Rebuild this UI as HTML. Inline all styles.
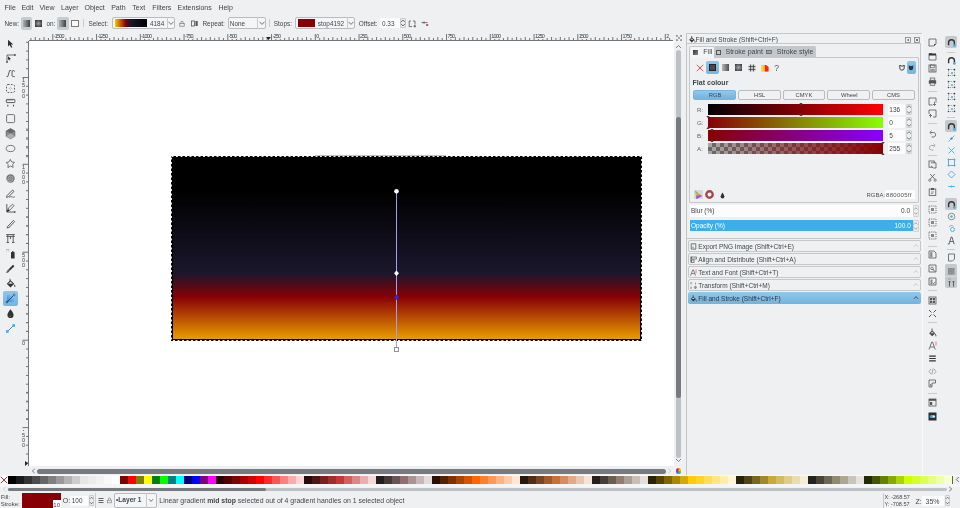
<!DOCTYPE html>
<html><head><meta charset="utf-8"><style>
html,body{margin:0;padding:0}
body{width:960px;height:508px;overflow:hidden;position:relative;background:#eff0f1;font-family:"Liberation Sans",sans-serif;color:#31363b}
#root{position:absolute;left:0;top:0;width:960px;height:508px;will-change:transform;background:#eff0f1}
.t{position:absolute;white-space:nowrap}
.b{position:absolute;display:block}
i{display:block;flex:none}
</style></head><body>
<div id="root">
<div class="t" style="left:4.50px;top:4.07px;font-size:7px;line-height:7px;color:#41464b;font-weight:normal;">File</div>
<div class="t" style="left:21.40px;top:4.07px;font-size:7px;line-height:7px;color:#41464b;font-weight:normal;">Edit</div>
<div class="t" style="left:39.50px;top:4.07px;font-size:7px;line-height:7px;color:#41464b;font-weight:normal;">View</div>
<div class="t" style="left:61.00px;top:4.07px;font-size:7px;line-height:7px;color:#41464b;font-weight:normal;">Layer</div>
<div class="t" style="left:84.50px;top:4.07px;font-size:7px;line-height:7px;color:#41464b;font-weight:normal;">Object</div>
<div class="t" style="left:111.20px;top:4.07px;font-size:7px;line-height:7px;color:#41464b;font-weight:normal;">Path</div>
<div class="t" style="left:132.30px;top:4.07px;font-size:7px;line-height:7px;color:#41464b;font-weight:normal;">Text</div>
<div class="t" style="left:152.30px;top:4.07px;font-size:7px;line-height:7px;color:#41464b;font-weight:normal;">Filters</div>
<div class="t" style="left:177.50px;top:4.07px;font-size:7px;line-height:7px;color:#41464b;font-weight:normal;">Extensions</div>
<div class="t" style="left:218.40px;top:4.07px;font-size:7px;line-height:7px;color:#41464b;font-weight:normal;">Help</div>
<div class="t" style="left:4.50px;top:20.58px;font-size:6.4px;line-height:6.4px;color:#41464b;font-weight:normal;">New:</div>
<div class="b" style="left:21px;top:17px;width:11px;height:13px;background:#c6cbcf;border-radius:2px"></div>
<div class="b" style="left:23px;top:20px;width:7px;height:7px;background:linear-gradient(to right,#b0b0b0,#404040)"></div>
<div class="b" style="left:35px;top:20px;width:7px;height:7px;background:radial-gradient(circle,#a0a0a0 0,#3a3a3a 80%)"></div>
<div class="t" style="left:46.50px;top:20.58px;font-size:6.4px;line-height:6.4px;color:#41464b;font-weight:normal;">on:</div>
<div class="b" style="left:57px;top:17px;width:12px;height:13px;background:#c6cbcf;border-radius:2px"></div>
<div class="b" style="left:59px;top:20px;width:7px;height:7px;background:linear-gradient(to right,#b0b0b0,#404040)"></div>
<div class="b" style="left:71px;top:20px;width:8px;height:7px;background:#fafafa;border:1px solid #7a7a7a;box-sizing:border-box"></div>
<div class="b" style="left:83px;top:19px;width:1px;height:8px;background:#c8cbce"></div>
<div class="t" style="left:88.50px;top:20.58px;font-size:6.4px;line-height:6.4px;color:#41464b;font-weight:normal;">Select:</div>
<div class="b" style="left:112px;top:17px;width:63px;height:12px;background:#f4f5f6;border:1px solid #b9bcbf;border-radius:2px;box-sizing:border-box"></div>
<div class="b" style="left:115px;top:19px;width:32px;height:8px;background:linear-gradient(to right,#ffc200 0%,#880005 33%,#1a172c 47%,#000 100%)"></div>
<div class="t" style="left:150.00px;top:20.58px;font-size:6.4px;line-height:6.4px;color:#41464b;font-weight:normal;">4184</div>
<div class="b" style="left:167px;top:17px;width:1px;height:12px;background:#c8cbce"></div>
<svg class="b" style="left:168px;top:20px;" width="6" height="6" viewBox="0 0 6 6"><path d="M0.5 1.8 L3 4.4 L5.5 1.8" stroke="#4a4e52" stroke-width="0.8" fill="none"/></svg>
<svg class="b" style="left:179px;top:20px;" width="6" height="7" viewBox="0 0 6 7"><path d="M1.8 3.4 V2.5 a1.2 1.2 0 0 1 2.4 0 V3.4" stroke="#777" stroke-width="0.7" fill="none"/><rect x="0.8" y="3.6" width="4.4" height="2.6" stroke="#777" stroke-width="0.7" fill="none"/></svg>
<svg class="b" style="left:191px;top:20px;" width="7" height="7" viewBox="0 0 7 7"><rect x="0.5" y="1" width="3" height="5" fill="none" stroke="#555" stroke-width="0.8"/><rect x="4.5" y="1" width="2.2" height="5" fill="#555"/></svg>
<div class="t" style="left:202.50px;top:20.58px;font-size:6.4px;line-height:6.4px;color:#41464b;font-weight:normal;">Repeat:</div>
<div class="b" style="left:228px;top:17px;width:38px;height:12px;background:#f4f5f6;border:1px solid #b9bcbf;border-radius:2px;box-sizing:border-box"></div>
<div class="t" style="left:229.80px;top:20.58px;font-size:6.4px;line-height:6.4px;color:#41464b;font-weight:normal;">None</div>
<div class="b" style="left:257px;top:17px;width:1px;height:12px;background:#c8cbce"></div>
<svg class="b" style="left:258.5px;top:20px;" width="6" height="6" viewBox="0 0 6 6"><path d="M0.5 1.8 L3 4.4 L5.5 1.8" stroke="#4a4e52" stroke-width="0.8" fill="none"/></svg>
<div class="b" style="left:269px;top:19px;width:1px;height:8px;background:#c8cbce"></div>
<div class="t" style="left:273.80px;top:20.58px;font-size:6.4px;line-height:6.4px;color:#41464b;font-weight:normal;">Stops:</div>
<div class="b" style="left:295px;top:17px;width:60px;height:12px;background:#f4f5f6;border:1px solid #b9bcbf;border-radius:2px;box-sizing:border-box"></div>
<div class="b" style="left:298px;top:19px;width:17px;height:8px;background:#880005"></div>
<div class="t" style="left:317.80px;top:20.58px;font-size:6.4px;line-height:6.4px;color:#41464b;font-weight:normal;">stop4192</div>
<div class="b" style="left:347px;top:17px;width:1px;height:12px;background:#c8cbce"></div>
<svg class="b" style="left:348px;top:20px;" width="6" height="6" viewBox="0 0 6 6"><path d="M0.5 1.8 L3 4.4 L5.5 1.8" stroke="#4a4e52" stroke-width="0.8" fill="none"/></svg>
<div class="t" style="left:358.80px;top:20.58px;font-size:6.4px;line-height:6.4px;color:#41464b;font-weight:normal;">Offset:</div>
<div class="b" style="left:380px;top:18px;width:20px;height:10px;background:#fcfcfc"></div>
<div class="t" style="left:382.00px;top:20.58px;font-size:6.4px;line-height:6.4px;color:#41464b;font-weight:normal;">0.33</div>
<div class="b" style="left:400px;top:18px;width:6px;height:10px;background:#eceded;border:1px solid #c8cbce;border-radius:1px;box-sizing:border-box"></div>
<svg class="b" style="left:400px;top:18px;" width="6" height="10" viewBox="0 0 6 10"><path d="M0.9 4.2 L3 2 L5.1 4.2 M0.9 5.8 L3 8 L5.1 5.8" stroke="#444" stroke-width="0.75" fill="none"/></svg>
<svg class="b" style="left:408px;top:20px;" width="8" height="8" viewBox="0 0 8 8"><path d="M1.2 1 V6.6 H4 M1.2 1 H3 M5 1 H7 V4.5" stroke="#555" stroke-width="0.8" fill="none"/><path d="M6.8 5 V7.4 M5.6 6.2 H8" stroke="#444" stroke-width="0.8"/></svg>
<svg class="b" style="left:421px;top:20px;" width="8" height="7" viewBox="0 0 8 7"><path d="M0.5 2.6 H6.5" stroke="#555" stroke-width="0.8"/><path d="M3 1.4 V3.8" stroke="#555" stroke-width="0.8"/><rect x="5.2" y="4" width="2" height="2" fill="#e8405a"/></svg>
<svg class="b" style="left:29px;top:30px;" width="645" height="11" viewBox="0 0 645 11"><rect x="0" y="10" width="644" height="1" fill="#72767a"/><rect x="1.43" y="8" width="1" height="2" fill="#72767a"/><rect x="5.80" y="7" width="1" height="3" fill="#72767a"/><rect x="10.18" y="8" width="1" height="2" fill="#72767a"/><rect x="14.55" y="7" width="1" height="3" fill="#72767a"/><rect x="18.93" y="8" width="1" height="2" fill="#72767a"/><rect x="23.30" y="4" width="1" height="6" fill="#72767a"/><rect x="27.68" y="8" width="1" height="2" fill="#72767a"/><rect x="32.05" y="7" width="1" height="3" fill="#72767a"/><rect x="36.43" y="8" width="1" height="2" fill="#72767a"/><rect x="40.80" y="7" width="1" height="3" fill="#72767a"/><rect x="45.18" y="8" width="1" height="2" fill="#72767a"/><rect x="49.55" y="7" width="1" height="3" fill="#72767a"/><rect x="53.93" y="8" width="1" height="2" fill="#72767a"/><rect x="58.30" y="7" width="1" height="3" fill="#72767a"/><rect x="62.68" y="8" width="1" height="2" fill="#72767a"/><rect x="67.05" y="4" width="1" height="6" fill="#72767a"/><rect x="71.43" y="8" width="1" height="2" fill="#72767a"/><rect x="75.80" y="7" width="1" height="3" fill="#72767a"/><rect x="80.18" y="8" width="1" height="2" fill="#72767a"/><rect x="84.55" y="7" width="1" height="3" fill="#72767a"/><rect x="88.93" y="8" width="1" height="2" fill="#72767a"/><rect x="93.30" y="7" width="1" height="3" fill="#72767a"/><rect x="97.68" y="8" width="1" height="2" fill="#72767a"/><rect x="102.05" y="7" width="1" height="3" fill="#72767a"/><rect x="106.43" y="8" width="1" height="2" fill="#72767a"/><rect x="110.80" y="4" width="1" height="6" fill="#72767a"/><rect x="115.18" y="8" width="1" height="2" fill="#72767a"/><rect x="119.55" y="7" width="1" height="3" fill="#72767a"/><rect x="123.93" y="8" width="1" height="2" fill="#72767a"/><rect x="128.30" y="7" width="1" height="3" fill="#72767a"/><rect x="132.68" y="8" width="1" height="2" fill="#72767a"/><rect x="137.05" y="7" width="1" height="3" fill="#72767a"/><rect x="141.43" y="8" width="1" height="2" fill="#72767a"/><rect x="145.80" y="7" width="1" height="3" fill="#72767a"/><rect x="150.18" y="8" width="1" height="2" fill="#72767a"/><rect x="154.55" y="4" width="1" height="6" fill="#72767a"/><rect x="158.93" y="8" width="1" height="2" fill="#72767a"/><rect x="163.30" y="7" width="1" height="3" fill="#72767a"/><rect x="167.68" y="8" width="1" height="2" fill="#72767a"/><rect x="172.05" y="7" width="1" height="3" fill="#72767a"/><rect x="176.43" y="8" width="1" height="2" fill="#72767a"/><rect x="180.80" y="7" width="1" height="3" fill="#72767a"/><rect x="185.18" y="8" width="1" height="2" fill="#72767a"/><rect x="189.55" y="7" width="1" height="3" fill="#72767a"/><rect x="193.93" y="8" width="1" height="2" fill="#72767a"/><rect x="198.30" y="4" width="1" height="6" fill="#72767a"/><rect x="202.68" y="8" width="1" height="2" fill="#72767a"/><rect x="207.05" y="7" width="1" height="3" fill="#72767a"/><rect x="211.43" y="8" width="1" height="2" fill="#72767a"/><rect x="215.80" y="7" width="1" height="3" fill="#72767a"/><rect x="220.18" y="8" width="1" height="2" fill="#72767a"/><rect x="224.55" y="7" width="1" height="3" fill="#72767a"/><rect x="228.93" y="8" width="1" height="2" fill="#72767a"/><rect x="233.30" y="7" width="1" height="3" fill="#72767a"/><rect x="237.68" y="8" width="1" height="2" fill="#72767a"/><rect x="242.05" y="4" width="1" height="6" fill="#72767a"/><rect x="246.43" y="8" width="1" height="2" fill="#72767a"/><rect x="250.80" y="7" width="1" height="3" fill="#72767a"/><rect x="255.18" y="8" width="1" height="2" fill="#72767a"/><rect x="259.55" y="7" width="1" height="3" fill="#72767a"/><rect x="263.93" y="8" width="1" height="2" fill="#72767a"/><rect x="268.30" y="7" width="1" height="3" fill="#72767a"/><rect x="272.68" y="8" width="1" height="2" fill="#72767a"/><rect x="277.05" y="7" width="1" height="3" fill="#72767a"/><rect x="281.43" y="8" width="1" height="2" fill="#72767a"/><rect x="285.80" y="4" width="1" height="6" fill="#72767a"/><rect x="290.18" y="8" width="1" height="2" fill="#72767a"/><rect x="294.55" y="7" width="1" height="3" fill="#72767a"/><rect x="298.93" y="8" width="1" height="2" fill="#72767a"/><rect x="303.30" y="7" width="1" height="3" fill="#72767a"/><rect x="307.68" y="8" width="1" height="2" fill="#72767a"/><rect x="312.05" y="7" width="1" height="3" fill="#72767a"/><rect x="316.43" y="8" width="1" height="2" fill="#72767a"/><rect x="320.80" y="7" width="1" height="3" fill="#72767a"/><rect x="325.18" y="8" width="1" height="2" fill="#72767a"/><rect x="329.55" y="4" width="1" height="6" fill="#72767a"/><rect x="333.93" y="8" width="1" height="2" fill="#72767a"/><rect x="338.30" y="7" width="1" height="3" fill="#72767a"/><rect x="342.68" y="8" width="1" height="2" fill="#72767a"/><rect x="347.05" y="7" width="1" height="3" fill="#72767a"/><rect x="351.43" y="8" width="1" height="2" fill="#72767a"/><rect x="355.80" y="7" width="1" height="3" fill="#72767a"/><rect x="360.18" y="8" width="1" height="2" fill="#72767a"/><rect x="364.55" y="7" width="1" height="3" fill="#72767a"/><rect x="368.93" y="8" width="1" height="2" fill="#72767a"/><rect x="373.30" y="4" width="1" height="6" fill="#72767a"/><rect x="377.68" y="8" width="1" height="2" fill="#72767a"/><rect x="382.05" y="7" width="1" height="3" fill="#72767a"/><rect x="386.43" y="8" width="1" height="2" fill="#72767a"/><rect x="390.80" y="7" width="1" height="3" fill="#72767a"/><rect x="395.18" y="8" width="1" height="2" fill="#72767a"/><rect x="399.55" y="7" width="1" height="3" fill="#72767a"/><rect x="403.93" y="8" width="1" height="2" fill="#72767a"/><rect x="408.30" y="7" width="1" height="3" fill="#72767a"/><rect x="412.68" y="8" width="1" height="2" fill="#72767a"/><rect x="417.05" y="4" width="1" height="6" fill="#72767a"/><rect x="421.43" y="8" width="1" height="2" fill="#72767a"/><rect x="425.80" y="7" width="1" height="3" fill="#72767a"/><rect x="430.18" y="8" width="1" height="2" fill="#72767a"/><rect x="434.55" y="7" width="1" height="3" fill="#72767a"/><rect x="438.93" y="8" width="1" height="2" fill="#72767a"/><rect x="443.30" y="7" width="1" height="3" fill="#72767a"/><rect x="447.68" y="8" width="1" height="2" fill="#72767a"/><rect x="452.05" y="7" width="1" height="3" fill="#72767a"/><rect x="456.43" y="8" width="1" height="2" fill="#72767a"/><rect x="460.80" y="4" width="1" height="6" fill="#72767a"/><rect x="465.18" y="8" width="1" height="2" fill="#72767a"/><rect x="469.55" y="7" width="1" height="3" fill="#72767a"/><rect x="473.93" y="8" width="1" height="2" fill="#72767a"/><rect x="478.30" y="7" width="1" height="3" fill="#72767a"/><rect x="482.67" y="8" width="1" height="2" fill="#72767a"/><rect x="487.05" y="7" width="1" height="3" fill="#72767a"/><rect x="491.42" y="8" width="1" height="2" fill="#72767a"/><rect x="495.80" y="7" width="1" height="3" fill="#72767a"/><rect x="500.17" y="8" width="1" height="2" fill="#72767a"/><rect x="504.55" y="4" width="1" height="6" fill="#72767a"/><rect x="508.92" y="8" width="1" height="2" fill="#72767a"/><rect x="513.30" y="7" width="1" height="3" fill="#72767a"/><rect x="517.67" y="8" width="1" height="2" fill="#72767a"/><rect x="522.05" y="7" width="1" height="3" fill="#72767a"/><rect x="526.42" y="8" width="1" height="2" fill="#72767a"/><rect x="530.80" y="7" width="1" height="3" fill="#72767a"/><rect x="535.17" y="8" width="1" height="2" fill="#72767a"/><rect x="539.55" y="7" width="1" height="3" fill="#72767a"/><rect x="543.92" y="8" width="1" height="2" fill="#72767a"/><rect x="548.30" y="4" width="1" height="6" fill="#72767a"/><rect x="552.67" y="8" width="1" height="2" fill="#72767a"/><rect x="557.05" y="7" width="1" height="3" fill="#72767a"/><rect x="561.42" y="8" width="1" height="2" fill="#72767a"/><rect x="565.80" y="7" width="1" height="3" fill="#72767a"/><rect x="570.17" y="8" width="1" height="2" fill="#72767a"/><rect x="574.55" y="7" width="1" height="3" fill="#72767a"/><rect x="578.92" y="8" width="1" height="2" fill="#72767a"/><rect x="583.30" y="7" width="1" height="3" fill="#72767a"/><rect x="587.67" y="8" width="1" height="2" fill="#72767a"/><rect x="592.05" y="4" width="1" height="6" fill="#72767a"/><rect x="596.42" y="8" width="1" height="2" fill="#72767a"/><rect x="600.80" y="7" width="1" height="3" fill="#72767a"/><rect x="605.17" y="8" width="1" height="2" fill="#72767a"/><rect x="609.55" y="7" width="1" height="3" fill="#72767a"/><rect x="613.92" y="8" width="1" height="2" fill="#72767a"/><rect x="618.30" y="7" width="1" height="3" fill="#72767a"/><rect x="622.67" y="8" width="1" height="2" fill="#72767a"/><rect x="627.05" y="7" width="1" height="3" fill="#72767a"/><rect x="631.42" y="8" width="1" height="2" fill="#72767a"/><rect x="635.80" y="4" width="1" height="6" fill="#72767a"/><rect x="640.17" y="8" width="1" height="2" fill="#72767a"/></svg>
<div class="t" style="left:53.70px;top:33.6px;font-size:5.4px;line-height:5.4px;color:#3a3f44;letter-spacing:-0.75px;background:#eff0f1;padding-right:0.5px">-1500</div>
<div class="t" style="left:97.45px;top:33.6px;font-size:5.4px;line-height:5.4px;color:#3a3f44;letter-spacing:-0.75px;background:#eff0f1;padding-right:0.5px">-1250</div>
<div class="t" style="left:141.20px;top:33.6px;font-size:5.4px;line-height:5.4px;color:#3a3f44;letter-spacing:-0.75px;background:#eff0f1;padding-right:0.5px">-1000</div>
<div class="t" style="left:184.95px;top:33.6px;font-size:5.4px;line-height:5.4px;color:#3a3f44;letter-spacing:-0.75px;background:#eff0f1;padding-right:0.5px">-750</div>
<div class="t" style="left:228.70px;top:33.6px;font-size:5.4px;line-height:5.4px;color:#3a3f44;letter-spacing:-0.75px;background:#eff0f1;padding-right:0.5px">-500</div>
<div class="t" style="left:272.45px;top:33.6px;font-size:5.4px;line-height:5.4px;color:#3a3f44;letter-spacing:-0.75px;background:#eff0f1;padding-right:0.5px">-250</div>
<div class="t" style="left:316.20px;top:33.6px;font-size:5.4px;line-height:5.4px;color:#3a3f44;letter-spacing:-0.75px;background:#eff0f1;padding-right:0.5px">0</div>
<div class="t" style="left:359.95px;top:33.6px;font-size:5.4px;line-height:5.4px;color:#3a3f44;letter-spacing:-0.75px;background:#eff0f1;padding-right:0.5px">250</div>
<div class="t" style="left:403.70px;top:33.6px;font-size:5.4px;line-height:5.4px;color:#3a3f44;letter-spacing:-0.75px;background:#eff0f1;padding-right:0.5px">500</div>
<div class="t" style="left:447.45px;top:33.6px;font-size:5.4px;line-height:5.4px;color:#3a3f44;letter-spacing:-0.75px;background:#eff0f1;padding-right:0.5px">750</div>
<div class="t" style="left:491.20px;top:33.6px;font-size:5.4px;line-height:5.4px;color:#3a3f44;letter-spacing:-0.75px;background:#eff0f1;padding-right:0.5px">1000</div>
<div class="t" style="left:534.95px;top:33.6px;font-size:5.4px;line-height:5.4px;color:#3a3f44;letter-spacing:-0.75px;background:#eff0f1;padding-right:0.5px">1250</div>
<div class="t" style="left:578.70px;top:33.6px;font-size:5.4px;line-height:5.4px;color:#3a3f44;letter-spacing:-0.75px;background:#eff0f1;padding-right:0.5px">1500</div>
<div class="t" style="left:622.45px;top:33.6px;font-size:5.4px;line-height:5.4px;color:#3a3f44;letter-spacing:-0.75px;background:#eff0f1;padding-right:0.5px">1750</div>
<div class="t" style="left:666.20px;top:33.6px;font-size:5.4px;line-height:5.4px;color:#3a3f44;letter-spacing:-0.75px;background:#eff0f1;padding-right:0.5px">2</div>
<svg class="b" style="left:265.5px;top:37px;" width="5" height="3" viewBox="0 0 5 3"><path d="M0 0 H5 L2.5 3Z" fill="#222"/></svg>
<svg class="b" style="left:20px;top:41px;" width="9" height="425" viewBox="0 0 9 425"><rect x="8" y="0" width="1" height="425" fill="#72767a"/><rect x="2.5" y="36.00" width="6" height="1" fill="#72767a"/><rect x="6" y="0.80" width="2.5" height="1" fill="#72767a"/><rect x="6" y="9.60" width="2.5" height="1" fill="#72767a"/><rect x="6" y="18.40" width="2.5" height="1" fill="#72767a"/><rect x="6" y="27.20" width="2.5" height="1" fill="#72767a"/><rect x="6" y="44.80" width="2.5" height="1" fill="#72767a"/><rect x="6" y="53.60" width="2.5" height="1" fill="#72767a"/><rect x="6" y="62.40" width="2.5" height="1" fill="#72767a"/><rect x="6" y="71.20" width="2.5" height="1" fill="#72767a"/><rect x="6" y="80.00" width="2.5" height="1" fill="#72767a"/><rect x="6" y="88.80" width="2.5" height="1" fill="#72767a"/><rect x="6" y="97.60" width="2.5" height="1" fill="#72767a"/><rect x="6" y="106.40" width="2.5" height="1" fill="#72767a"/><rect x="6" y="115.20" width="2.5" height="1" fill="#72767a"/><rect x="2.5" y="122.80" width="6" height="1" fill="#72767a"/><rect x="6" y="87.60" width="2.5" height="1" fill="#72767a"/><rect x="6" y="96.40" width="2.5" height="1" fill="#72767a"/><rect x="6" y="105.20" width="2.5" height="1" fill="#72767a"/><rect x="6" y="114.00" width="2.5" height="1" fill="#72767a"/><rect x="6" y="131.60" width="2.5" height="1" fill="#72767a"/><rect x="6" y="140.40" width="2.5" height="1" fill="#72767a"/><rect x="6" y="149.20" width="2.5" height="1" fill="#72767a"/><rect x="6" y="158.00" width="2.5" height="1" fill="#72767a"/><rect x="6" y="166.80" width="2.5" height="1" fill="#72767a"/><rect x="6" y="175.60" width="2.5" height="1" fill="#72767a"/><rect x="6" y="184.40" width="2.5" height="1" fill="#72767a"/><rect x="6" y="193.20" width="2.5" height="1" fill="#72767a"/><rect x="6" y="202.00" width="2.5" height="1" fill="#72767a"/><rect x="2.5" y="210.70" width="6" height="1" fill="#72767a"/><rect x="6" y="175.50" width="2.5" height="1" fill="#72767a"/><rect x="6" y="184.30" width="2.5" height="1" fill="#72767a"/><rect x="6" y="193.10" width="2.5" height="1" fill="#72767a"/><rect x="6" y="201.90" width="2.5" height="1" fill="#72767a"/><rect x="6" y="219.50" width="2.5" height="1" fill="#72767a"/><rect x="6" y="228.30" width="2.5" height="1" fill="#72767a"/><rect x="6" y="237.10" width="2.5" height="1" fill="#72767a"/><rect x="6" y="245.90" width="2.5" height="1" fill="#72767a"/><rect x="6" y="254.70" width="2.5" height="1" fill="#72767a"/><rect x="6" y="263.50" width="2.5" height="1" fill="#72767a"/><rect x="6" y="272.30" width="2.5" height="1" fill="#72767a"/><rect x="6" y="281.10" width="2.5" height="1" fill="#72767a"/><rect x="6" y="289.90" width="2.5" height="1" fill="#72767a"/><rect x="2.5" y="298.70" width="6" height="1" fill="#72767a"/><rect x="6" y="263.50" width="2.5" height="1" fill="#72767a"/><rect x="6" y="272.30" width="2.5" height="1" fill="#72767a"/><rect x="6" y="281.10" width="2.5" height="1" fill="#72767a"/><rect x="6" y="289.90" width="2.5" height="1" fill="#72767a"/><rect x="6" y="307.50" width="2.5" height="1" fill="#72767a"/><rect x="6" y="316.30" width="2.5" height="1" fill="#72767a"/><rect x="6" y="325.10" width="2.5" height="1" fill="#72767a"/><rect x="6" y="333.90" width="2.5" height="1" fill="#72767a"/><rect x="6" y="342.70" width="2.5" height="1" fill="#72767a"/><rect x="6" y="351.50" width="2.5" height="1" fill="#72767a"/><rect x="6" y="360.30" width="2.5" height="1" fill="#72767a"/><rect x="6" y="369.10" width="2.5" height="1" fill="#72767a"/><rect x="6" y="377.90" width="2.5" height="1" fill="#72767a"/><rect x="2.5" y="386.10" width="6" height="1" fill="#72767a"/><rect x="6" y="350.90" width="2.5" height="1" fill="#72767a"/><rect x="6" y="359.70" width="2.5" height="1" fill="#72767a"/><rect x="6" y="368.50" width="2.5" height="1" fill="#72767a"/><rect x="6" y="377.30" width="2.5" height="1" fill="#72767a"/><rect x="6" y="394.90" width="2.5" height="1" fill="#72767a"/><rect x="6" y="403.70" width="2.5" height="1" fill="#72767a"/><rect x="6" y="412.50" width="2.5" height="1" fill="#72767a"/><rect x="6" y="421.30" width="2.5" height="1" fill="#72767a"/></svg>
<div class="t" style="left:21.9px;top:78.30px;font-size:5.5px;line-height:5.5px;color:#3a3f44;background:#eff0f1">1</div>
<div class="t" style="left:21.9px;top:83.40px;font-size:5.5px;line-height:5.5px;color:#3a3f44;background:#eff0f1">5</div>
<div class="t" style="left:21.9px;top:88.50px;font-size:5.5px;line-height:5.5px;color:#3a3f44;background:#eff0f1">0</div>
<div class="t" style="left:21.9px;top:93.60px;font-size:5.5px;line-height:5.5px;color:#3a3f44;background:#eff0f1">0</div>
<div class="t" style="left:21.9px;top:165.10px;font-size:5.5px;line-height:5.5px;color:#3a3f44;background:#eff0f1">1</div>
<div class="t" style="left:21.9px;top:170.20px;font-size:5.5px;line-height:5.5px;color:#3a3f44;background:#eff0f1">0</div>
<div class="t" style="left:21.9px;top:175.30px;font-size:5.5px;line-height:5.5px;color:#3a3f44;background:#eff0f1">0</div>
<div class="t" style="left:21.9px;top:180.40px;font-size:5.5px;line-height:5.5px;color:#3a3f44;background:#eff0f1">0</div>
<div class="t" style="left:21.9px;top:253.00px;font-size:5.5px;line-height:5.5px;color:#3a3f44;background:#eff0f1">5</div>
<div class="t" style="left:21.9px;top:258.10px;font-size:5.5px;line-height:5.5px;color:#3a3f44;background:#eff0f1">0</div>
<div class="t" style="left:21.9px;top:263.20px;font-size:5.5px;line-height:5.5px;color:#3a3f44;background:#eff0f1">0</div>
<div class="t" style="left:21.9px;top:341.00px;font-size:5.5px;line-height:5.5px;color:#3a3f44;background:#eff0f1">0</div>
<div class="b" style="left:23px;top:430px;width:1px;height:1px;background:#777"></div>
<div class="t" style="left:21.9px;top:432.70px;font-size:5.5px;line-height:5.5px;color:#3a3f44;background:#eff0f1">5</div>
<div class="t" style="left:21.9px;top:437.80px;font-size:5.5px;line-height:5.5px;color:#3a3f44;background:#eff0f1">0</div>
<div class="t" style="left:21.9px;top:442.90px;font-size:5.5px;line-height:5.5px;color:#3a3f44;background:#eff0f1">0</div>
<svg class="b" style="left:25px;top:461px;" width="3" height="5" viewBox="0 0 3 5"><path d="M0 0 L3 2.5 L0 5Z" fill="#222"/></svg>
<div class="b" style="left:29px;top:41px;width:645px;height:425px;background:#ffffff"></div>
<div class="b" style="left:315px;top:155px;width:131px;height:1px;background:#c0c0c0"></div>
<div class="b" style="left:171px;top:156px;width:471px;height:185px;background:linear-gradient(to bottom,#000 0px,#000 32px,#1a172c 115px,#880005 139px,#ffc200 191px);border:2px solid #000;box-sizing:border-box"></div>
<svg class="b" style="left:171px;top:156px;" width="471" height="185" viewBox="0 0 471 185"><rect x="0.5" y="0.5" width="470" height="184" fill="none" stroke="#e6e6e6" stroke-width="1" stroke-dasharray="2 2.5"/></svg>
<svg class="b" style="left:390px;top:185px;" width="14" height="170" viewBox="0 0 14 170">
<line x1="6.5" y1="6" x2="6.5" y2="162" stroke="#a0a0ee" stroke-width="1"/>
<circle cx="6.5" cy="6.2" r="2.3" fill="#fff"/>
<path d="M6.5 85.6 L9 88.3 L6.5 91 L4 88.3Z" fill="#fff"/>
<path d="M6.5 109.6 L9 112.3 L6.5 115 L4 112.3Z" fill="#1a2ee8"/>
<rect x="4.5" y="162.5" width="4" height="4" fill="#fff" stroke="#8a8a8a" stroke-width="0.9"/>
</svg>
<svg class="b" style="left:675.5px;top:34.5px;" width="6" height="6" viewBox="0 0 6 6"><path d="M1.2 1.2 L4.8 4.8 M4.8 1.2 L1.2 4.8" stroke="#777" stroke-width="0.6"/><path d="M0.3 0.3 H2 M0.3 0.3 V2 M5.7 0.3 H4 M5.7 0.3 V2 M0.3 5.7 H2 M0.3 5.7 V4 M5.7 5.7 H4 M5.7 5.7 V4" stroke="#666" stroke-width="0.7"/></svg>
<svg class="b" style="left:675px;top:44px;" width="7" height="5" viewBox="0 0 7 5"><path d="M1 4 L3.5 1.5 L6 4" stroke="#666" stroke-width="0.8" fill="none"/></svg>
<div class="b" style="left:676px;top:50px;width:5px;height:408px;background:#bcc1c6;border-radius:2.5px"></div>
<div class="b" style="left:676px;top:117px;width:5px;height:281px;background:#76797e;border-radius:2.5px"></div>
<svg class="b" style="left:675px;top:458px;" width="7" height="5" viewBox="0 0 7 5"><path d="M1 1 L3.5 3.5 L6 1" stroke="#666" stroke-width="0.8" fill="none"/></svg>
<div class="b" style="left:675.8px;top:468px;width:5.5px;height:5.5px;background:conic-gradient(from 20deg,#f90,#dd0,#3c4,#0bb,#36f,#a3c,#f05,#f90);border-radius:50%"></div>
<svg class="b" style="left:31px;top:468px;" width="5" height="6" viewBox="0 0 5 6"><path d="M3.8 0.8 L1.3 3 L3.8 5.2" stroke="#666" stroke-width="0.8" fill="none"/></svg>
<div class="b" style="left:37px;top:468.5px;width:629px;height:5px;background:#76797e;border-radius:2.5px"></div>
<svg class="b" style="left:666.5px;top:468px;" width="5" height="6" viewBox="0 0 5 6"><path d="M1.2 0.8 L3.7 3 L1.2 5.2" stroke="#bbb" stroke-width="0.8" fill="none"/></svg>
<div class="b" style="left:0px;top:475px;width:960px;height:1px;background:#f7f8f8"></div>
<div class="b" style="left:0px;top:476px;width:8px;height:8px;background:#fff"></div>
<svg class="b" style="left:0px;top:476px;" width="8" height="8" viewBox="0 0 8 8"><path d="M0.8 0.8 L7.2 7.2 M7.2 0.8 L0.8 7.2" stroke="#a02020" stroke-width="0.9"/></svg>
<div class="b" style="left:8px;top:476px;height:8px;display:flex"><i style="width:8px;height:8px;background:#000000"></i><i style="width:8px;height:8px;background:#1a1a1a"></i><i style="width:8px;height:8px;background:#333333"></i><i style="width:8px;height:8px;background:#4d4d4d"></i><i style="width:8px;height:8px;background:#666666"></i><i style="width:8px;height:8px;background:#808080"></i><i style="width:8px;height:8px;background:#999999"></i><i style="width:8px;height:8px;background:#b3b3b3"></i><i style="width:8px;height:8px;background:#cccccc"></i><i style="width:8px;height:8px;background:#e6e6e6"></i><i style="width:8px;height:8px;background:#ececec"></i><i style="width:8px;height:8px;background:#f2f2f2"></i><i style="width:8px;height:8px;background:#f9f9f9"></i><i style="width:8px;height:8px;background:#ffffff"></i><i style="width:8px;height:8px;background:#800000"></i><i style="width:8px;height:8px;background:#ff0000"></i><i style="width:8px;height:8px;background:#808000"></i><i style="width:8px;height:8px;background:#ffff00"></i><i style="width:8px;height:8px;background:#008000"></i><i style="width:8px;height:8px;background:#00ff00"></i><i style="width:8px;height:8px;background:#008080"></i><i style="width:8px;height:8px;background:#00ffff"></i><i style="width:8px;height:8px;background:#000080"></i><i style="width:8px;height:8px;background:#0000ff"></i><i style="width:8px;height:8px;background:#800080"></i><i style="width:8px;height:8px;background:#ff00ff"></i><i style="width:8px;height:8px;background:#2b0000"></i><i style="width:8px;height:8px;background:#550000"></i><i style="width:8px;height:8px;background:#800000"></i><i style="width:8px;height:8px;background:#aa0000"></i><i style="width:8px;height:8px;background:#d40000"></i><i style="width:8px;height:8px;background:#ff0000"></i><i style="width:8px;height:8px;background:#ff2a2a"></i><i style="width:8px;height:8px;background:#ff5555"></i><i style="width:8px;height:8px;background:#ff8080"></i><i style="width:8px;height:8px;background:#ffaaaa"></i><i style="width:8px;height:8px;background:#ffd5d5"></i><i style="width:8px;height:8px;background:#280b0b"></i><i style="width:8px;height:8px;background:#501616"></i><i style="width:8px;height:8px;background:#782121"></i><i style="width:8px;height:8px;background:#a02c2c"></i><i style="width:8px;height:8px;background:#c83737"></i><i style="width:8px;height:8px;background:#d35f5f"></i><i style="width:8px;height:8px;background:#de8787"></i><i style="width:8px;height:8px;background:#e9afaf"></i><i style="width:8px;height:8px;background:#f4d7d7"></i><i style="width:8px;height:8px;background:#241c1c"></i><i style="width:8px;height:8px;background:#483737"></i><i style="width:8px;height:8px;background:#6c5353"></i><i style="width:8px;height:8px;background:#916f6f"></i><i style="width:8px;height:8px;background:#ac9393"></i><i style="width:8px;height:8px;background:#c8b7b7"></i><i style="width:8px;height:8px;background:#e3dbdb"></i><i style="width:8px;height:8px;background:#2b1100"></i><i style="width:8px;height:8px;background:#552200"></i><i style="width:8px;height:8px;background:#803300"></i><i style="width:8px;height:8px;background:#aa4400"></i><i style="width:8px;height:8px;background:#d45500"></i><i style="width:8px;height:8px;background:#ff6600"></i><i style="width:8px;height:8px;background:#ff7f2a"></i><i style="width:8px;height:8px;background:#ff9955"></i><i style="width:8px;height:8px;background:#ffb380"></i><i style="width:8px;height:8px;background:#ffccaa"></i><i style="width:8px;height:8px;background:#ffe6d5"></i><i style="width:8px;height:8px;background:#28170b"></i><i style="width:8px;height:8px;background:#502d16"></i><i style="width:8px;height:8px;background:#784421"></i><i style="width:8px;height:8px;background:#a05a2c"></i><i style="width:8px;height:8px;background:#c87137"></i><i style="width:8px;height:8px;background:#d38d5f"></i><i style="width:8px;height:8px;background:#deaa87"></i><i style="width:8px;height:8px;background:#e9c6af"></i><i style="width:8px;height:8px;background:#f4e3d7"></i><i style="width:8px;height:8px;background:#241f1c"></i><i style="width:8px;height:8px;background:#483e37"></i><i style="width:8px;height:8px;background:#6c5d53"></i><i style="width:8px;height:8px;background:#917c6f"></i><i style="width:8px;height:8px;background:#ac9d93"></i><i style="width:8px;height:8px;background:#c8beb7"></i><i style="width:8px;height:8px;background:#e3dedb"></i><i style="width:8px;height:8px;background:#2b2200"></i><i style="width:8px;height:8px;background:#554400"></i><i style="width:8px;height:8px;background:#806600"></i><i style="width:8px;height:8px;background:#aa8800"></i><i style="width:8px;height:8px;background:#d4aa00"></i><i style="width:8px;height:8px;background:#ffcc00"></i><i style="width:8px;height:8px;background:#ffd42a"></i><i style="width:8px;height:8px;background:#ffdd55"></i><i style="width:8px;height:8px;background:#ffe680"></i><i style="width:8px;height:8px;background:#ffeeaa"></i><i style="width:8px;height:8px;background:#fff6d5"></i><i style="width:8px;height:8px;background:#28220b"></i><i style="width:8px;height:8px;background:#504416"></i><i style="width:8px;height:8px;background:#786721"></i><i style="width:8px;height:8px;background:#a0892c"></i><i style="width:8px;height:8px;background:#c8ab37"></i><i style="width:8px;height:8px;background:#d3bc5f"></i><i style="width:8px;height:8px;background:#decd87"></i><i style="width:8px;height:8px;background:#e9ddaf"></i><i style="width:8px;height:8px;background:#f4eed7"></i><i style="width:8px;height:8px;background:#24221c"></i><i style="width:8px;height:8px;background:#484537"></i><i style="width:8px;height:8px;background:#6c6753"></i><i style="width:8px;height:8px;background:#918a6f"></i><i style="width:8px;height:8px;background:#aca793"></i><i style="width:8px;height:8px;background:#c8c4b7"></i><i style="width:8px;height:8px;background:#e3e2db"></i><i style="width:8px;height:8px;background:#222b00"></i><i style="width:8px;height:8px;background:#445500"></i><i style="width:8px;height:8px;background:#668000"></i><i style="width:8px;height:8px;background:#88aa00"></i><i style="width:8px;height:8px;background:#aad400"></i><i style="width:8px;height:8px;background:#ccff00"></i><i style="width:8px;height:8px;background:#d4ff2a"></i><i style="width:8px;height:8px;background:#ddff55"></i><i style="width:8px;height:8px;background:#e5ff80"></i><i style="width:8px;height:8px;background:#eeffaa"></i><i style="width:8px;height:8px;background:#f6ffd5"></i></div>
<div class="b" style="left:952px;top:476px;width:1px;height:8px;background:#5a6a20"></div>
<svg class="b" style="left:955px;top:476px;" width="5" height="7" viewBox="0 0 5 7"><path d="M3.8 1 L1.3 3.5 L3.8 6" stroke="#555" stroke-width="0.8" fill="none"/></svg>
<div class="b" style="left:0px;top:484px;width:960px;height:3px;background:#f3f5f6"></div>
<svg class="b" style="left:2px;top:486px;" width="5" height="6" viewBox="0 0 5 6"><path d="M3.8 0.8 L1.3 3 L3.8 5.2" stroke="#ccc" stroke-width="0.8" fill="none"/></svg>
<div class="b" style="left:8px;top:487.5px;width:939px;height:3px;background:#bcc1c6;border-radius:1.5px"></div>
<div class="b" style="left:8px;top:487.5px;width:258px;height:3px;background:#76797e;border-radius:1.5px"></div>
<svg class="b" style="left:947.5px;top:486px;" width="5" height="6" viewBox="0 0 5 6"><path d="M1.2 0.8 L3.7 3 L1.2 5.2" stroke="#555" stroke-width="0.8" fill="none"/></svg>
<div class="t" style="left:0.70px;top:494.22px;font-size:6px;line-height:6px;color:#41464b;font-weight:normal;">Fill:</div>
<div class="t" style="left:0.70px;top:501.22px;font-size:6px;line-height:6px;color:#41464b;font-weight:normal;">Stroke:</div>
<div class="b" style="left:22px;top:493px;width:39px;height:15px;background:#880005"></div>
<div class="b" style="left:53px;top:500px;width:8px;height:8px;background:#fcfcfc"></div>
<div class="t" style="left:53.30px;top:501.92px;font-size:6px;line-height:6px;color:#41464b;font-weight:normal;">10</div>
<div class="t" style="left:62.80px;top:497.07px;font-size:7px;line-height:7px;color:#41464b;font-weight:normal;">O:</div>
<div class="b" style="left:70px;top:495.5px;width:18px;height:10px;background:#fcfcfc"></div>
<div class="t" style="left:71.80px;top:497.58px;font-size:6.4px;line-height:6.4px;color:#41464b;font-weight:normal;">100</div>
<div class="b" style="left:89px;top:495px;width:5px;height:11px;background:#eceded;border:1px solid #c8cbce;border-radius:1px;box-sizing:border-box"></div>
<svg class="b" style="left:89px;top:495px;" width="5" height="11" viewBox="0 0 5 11"><path d="M1 3.8 L2.5 2.2 L4 3.8 M1 7.2 L2.5 8.8 L4 7.2" stroke="#444" stroke-width="0.7" fill="none"/></svg>
<div class="b" style="left:95px;top:492.5px;width:1px;height:15.5px;background:#c8cbce"></div>
<svg class="b" style="left:98px;top:497px;" width="6" height="7" viewBox="0 0 6 7"><path d="M0.5 1.5 H5.5 M0.5 3.5 H5.5 M0.5 5.5 H5.5" stroke="#555" stroke-width="0.9"/></svg>
<svg class="b" style="left:106.5px;top:497px;" width="5" height="7" viewBox="0 0 5 7"><path d="M1.4 3 V2 a1.1 1.1 0 0 1 2.2 0 V3" stroke="#777" stroke-width="0.6" fill="none"/><rect x="0.6" y="3.2" width="3.8" height="2.6" stroke="#777" stroke-width="0.6" fill="none"/></svg>
<div class="b" style="left:114px;top:493px;width:42.5px;height:15px;background:#f4f5f6;border:1px solid #b9bcbf;border-radius:2px;box-sizing:border-box"></div>
<div class="t" style="left:116.00px;top:497.41px;font-size:6.6px;line-height:6.6px;color:#41464b;font-weight:bold;">•Layer 1</div>
<div class="b" style="left:146px;top:493px;width:1px;height:15px;background:#c8cbce"></div>
<svg class="b" style="left:148px;top:498px;" width="6" height="5" viewBox="0 0 6 5"><path d="M1 1.2 L3 3.4 L5 1.2" stroke="#555" stroke-width="0.8" fill="none"/></svg>
<div class="t" style="left:159.30px;top:498.26px;font-size:6.9px;line-height:6.9px;color:#41464b;font-weight:normal;">Linear gradient <b>mid stop</b> selected out of 4 gradient handles on 1 selected object</div>
<div class="b" style="left:883px;top:493px;width:1px;height:15px;background:#c8cbce"></div>
<div class="t" style="left:884.50px;top:494.84px;font-size:5.5px;line-height:5.5px;color:#41464b;font-weight:normal;font-family:"Liberation Mono";letter-spacing:-0.1px">X: -268.57</div>
<div class="t" style="left:884.50px;top:501.84px;font-size:5.5px;line-height:5.5px;color:#41464b;font-weight:normal;font-family:"Liberation Mono";letter-spacing:-0.1px">Y: -708.57</div>
<div class="t" style="left:915.50px;top:497.57px;font-size:7px;line-height:7px;color:#41464b;font-weight:normal;">Z:</div>
<div class="b" style="left:922px;top:495.5px;width:22px;height:10px;background:#fcfcfc"></div>
<div class="t" style="left:925.50px;top:497.57px;font-size:7px;line-height:7px;color:#41464b;font-weight:normal;">35%</div>
<div class="b" style="left:945px;top:495px;width:5px;height:11px;background:#eceded;border:1px solid #c8cbce;border-radius:1px;box-sizing:border-box"></div>
<svg class="b" style="left:945px;top:495px;" width="5" height="11" viewBox="0 0 5 11"><path d="M1 3.8 L2.5 2.2 L4 3.8 M1 7.2 L2.5 8.8 L4 7.2" stroke="#444" stroke-width="0.7" fill="none"/></svg>
<div class="b" style="left:3px;top:291px;width:15px;height:15px;background:linear-gradient(#8cc6ea,#74b5e2);border-radius:2px"></div>
<svg class="b" style="left:6px;top:38px;" width="9" height="11" viewBox="0 0 9 11"><path d="M2 1.8 L2 8.6 L3.7 7.1 L5.1 9.8 L6.3 9.2 L5 6.6 L7.3 6.5Z" fill="#333"/></svg>
<svg class="b" style="left:5px;top:52px;" width="11" height="12" viewBox="0 0 11 12"><path d="M2 3 H9.5 M2 3 V10" stroke="#4d4d4d" stroke-width="0.8"/><rect x="9" y="2.2" width="1.8" height="1.6" fill="#4d4d4d"/><rect x="1.2" y="9.3" width="1.6" height="1.6" fill="#4d4d4d"/><path d="M3 4.2 L3 8 L4 7.2 L4.7 8.6 L5.4 8.3 L4.8 7 L6 7Z" fill="#333"/></svg>
<svg class="b" style="left:5px;top:68px;" width="11" height="11" viewBox="0 0 11 11"><path d="M1.5 8.6 H2.8 L4.6 2.5 H6.2 M9.5 3.6 Q9.5 2.5 8.2 2.5 Q7 2.5 7 4 V7.5 Q7 8.6 8.2 8.6 H9.8" stroke="#4d4d4d" stroke-width="0.9" fill="none"/></svg>
<svg class="b" style="left:5px;top:83px;" width="11" height="11" viewBox="0 0 11 11"><rect x="1.5" y="1.5" width="8" height="8" rx="1.5" fill="none" stroke="#4d4d4d" stroke-width="0.9" stroke-dasharray="1.6 1.4"/><path d="M5.5 3.8 V4.6 M3.8 5.5 H4.6 M6.4 5.5 H7.2 M5.5 6.4 V7.2" stroke="#888" stroke-width="0.7"/></svg>
<svg class="b" style="left:5px;top:98px;" width="11" height="11" viewBox="0 0 11 11"><rect x="1.3" y="1.4" width="8.6" height="3.2" rx="0.6" fill="none" stroke="#4d4d4d" stroke-width="0.9"/><path d="M3 2 V3 M5 2 V3 M7 2 V3" stroke="#4d4d4d" stroke-width="0.6"/><path d="M2.8 6.8 V8.6 M8.5 6.8 V8.6" stroke="#4d4d4d" stroke-width="1.1"/></svg>
<svg class="b" style="left:5px;top:113px;" width="11" height="11" viewBox="0 0 11 11"><rect x="1.6" y="1.6" width="8" height="8" rx="1" fill="none" stroke="#666" stroke-width="0.9"/></svg>
<svg class="b" style="left:5px;top:128px;" width="11" height="12" viewBox="0 0 11 12"><path d="M5.5 0.6 L9.9 3.1 V8.3 L5.5 10.8 L1.1 8.3 V3.1Z" fill="#8a8a8a" stroke="#555" stroke-width="0.6"/><path d="M5.5 0.6 L9.9 3.1 L5.5 5.6 L1.1 3.1Z" fill="#666"/><path d="M5.5 5.6 L9.9 8.3 L5.5 10.8 L1.1 8.3Z" fill="#b0b0b0"/></svg>
<svg class="b" style="left:5px;top:143px;" width="11" height="11" viewBox="0 0 11 11"><ellipse cx="5.5" cy="5.5" rx="4.3" ry="3.1" fill="none" stroke="#666" stroke-width="0.9"/></svg>
<svg class="b" style="left:5px;top:158px;" width="11" height="11" viewBox="0 0 11 11"><path d="M5.3 1.4 L6.6 3.9 L9.5 4.3 L7.6 6.4 L8.2 9.3 L5.5 8.1 L2.9 9.5 L3.2 6.6 L1.2 4.5 L4 3.9Z" fill="none" stroke="#666" stroke-width="0.9" stroke-linejoin="round"/></svg>
<svg class="b" style="left:5px;top:173px;" width="11" height="11" viewBox="0 0 11 11"><circle cx="5.5" cy="5.5" r="4.2" fill="#777"/><path d="M5.5 5.5 m-0.7 0 a0.7 0.7 0 1 1 1.4 0 a1.5 1.5 0 1 1 -3 0 a2.4 2.4 0 1 1 4.8 0 a3.2 3.2 0 1 1 -6.4 0" stroke="#d0d0d0" stroke-width="0.55" fill="none"/></svg>
<svg class="b" style="left:5px;top:188px;" width="11" height="11" viewBox="0 0 11 11"><path d="M2 7.6 L7.6 2 L9 3.4 L3.4 9 L1.6 9.3Z" fill="none" stroke="#4d4d4d" stroke-width="0.9"/><path d="M4 9.3 Q6 8 7.5 9 T10 8.5" stroke="#4d4d4d" stroke-width="0.7" fill="none"/></svg>
<svg class="b" style="left:5px;top:203px;" width="11" height="11" viewBox="0 0 11 11"><path d="M1.8 1 V9 H9.8" stroke="#4d4d4d" stroke-width="0.9" fill="none"/><path d="M2.4 8.4 L3.4 5 L7.6 1.2 L9 2.6 L5.2 6.8Z" fill="none" stroke="#4d4d4d" stroke-width="0.8"/><path d="M2.2 8.6 L4 6.8" stroke="#222" stroke-width="1.4"/><rect x="9" y="8.3" width="1.5" height="1.5" fill="#4d4d4d"/></svg>
<svg class="b" style="left:5px;top:218px;" width="11" height="11" viewBox="0 0 11 11"><path d="M2.4 8.8 L8.4 2.4 L9.6 3.6 L3.6 10Z" fill="none" stroke="#4d4d4d" stroke-width="0.9"/><path d="M2.4 8.8 L3.6 10 L1.6 10.6Z" fill="#4d4d4d"/></svg>
<svg class="b" style="left:5px;top:233px;" width="11" height="11" viewBox="0 0 11 11"><path d="M1.2 1.6 H9.8 M1.2 3.4 H9.8 M2.8 1.6 V9.5 M8.2 1.6 V9.5 M5.5 3.4 V6 M1.5 9.5 H4 M7 9.5 H9.5" stroke="#4d4d4d" stroke-width="0.9"/></svg>
<svg class="b" style="left:5px;top:248px;" width="11" height="11" viewBox="0 0 11 11"><rect x="6" y="4" width="3.6" height="6.5" rx="0.6" fill="#333"/><path d="M7 3.2 H8.6 V4.2 H7Z" fill="#333"/><path d="M1 1.5 H4.5 M1 3 H2 M3 3 H4" stroke="#aaa" stroke-width="0.7"/></svg>
<svg class="b" style="left:5px;top:263px;" width="11" height="11" viewBox="0 0 11 11"><path d="M5 7.6 L9.4 3.2 L8 1.8 L3.6 6.2Z" fill="#333"/><path d="M1.6 9.6 L2.6 8.6" stroke="#333" stroke-width="1.3"/><path d="M3.6 6.2 L5 7.6 L3.2 9.4 L1.8 8Z" fill="#555"/></svg>
<svg class="b" style="left:5px;top:278px;" width="11" height="11" viewBox="0 0 11 11"><path d="M1.8 5.8 L5.5 2.2 L9.2 5.8 L5.5 9.5Z" fill="#333"/><path d="M3.2 5.8 L5.5 3.6 L7.8 5.8Z" fill="#ddd"/><path d="M5 0.8 V3.8" stroke="#333" stroke-width="0.8"/><path d="M9 6.6 Q10.4 8 9.8 9" stroke="#333" stroke-width="0.9" fill="none"/></svg>
<svg class="b" style="left:5px;top:293px;" width="11" height="11" viewBox="0 0 11 11"><rect x="2" y="2" width="7" height="7" fill="url(#gt)" opacity="0.8"/><defs><linearGradient id="gt" x1="0" y1="1" x2="1" y2="0"><stop offset="0" stop-color="#1d7fd0"/><stop offset="1" stop-color="#8fd0ff"/></linearGradient></defs><path d="M2 9 L9 2" stroke="#1a3050" stroke-width="0.8"/><circle cx="1.9" cy="9.1" r="0.9" fill="none" stroke="#1a3050" stroke-width="0.6"/><circle cx="9.1" cy="1.9" r="0.9" fill="#dfefff" stroke="#1a3050" stroke-width="0.6"/></svg>
<svg class="b" style="left:5px;top:308px;" width="11" height="11" viewBox="0 0 11 11"><path d="M5.5 1.2 Q8.6 5 8.6 7 A3.1 3.1 0 0 1 2.4 7 Q2.4 5 5.5 1.2Z" fill="#333"/><path d="M4 7.6 A1.5 1.5 0 0 0 6 8.6" stroke="#888" stroke-width="0.5" fill="none"/></svg>
<svg class="b" style="left:5px;top:323px;" width="11" height="11" viewBox="0 0 11 11"><path d="M2.6 8.4 L8.4 2.6" stroke="#4a6070" stroke-width="0.8"/><rect x="1" y="7.2" width="2.6" height="2.6" fill="#3daee9"/><rect x="7.4" y="1.2" width="2.6" height="2.6" fill="#3daee9"/></svg>
<svg class="b" style="left:928px;top:38px;" width="9" height="9" viewBox="0 0 9 9"><path d="M1 1 H8 V6 L6 8 H1Z" fill="none" stroke="#555" stroke-width="0.8"/><path d="M6 8 L8 6 H6Z" fill="#555"/></svg>
<svg class="b" style="left:928px;top:52px;" width="9" height="9" viewBox="0 0 9 9"><path d="M1 1.5 H4 L5 2.5 H8 V8 H1Z" fill="none" stroke="#555" stroke-width="0.8"/><rect x="1" y="1.5" width="7" height="2" fill="#333"/></svg>
<svg class="b" style="left:928px;top:64px;" width="9" height="9" viewBox="0 0 9 9"><rect x="1" y="1" width="7" height="7" fill="none" stroke="#555" stroke-width="0.8"/><rect x="2.6" y="1" width="3.6" height="2.8" fill="none" stroke="#555" stroke-width="0.7"/><rect x="2.2" y="5" width="4.6" height="3" fill="#999"/></svg>
<svg class="b" style="left:928px;top:77px;" width="9" height="9" viewBox="0 0 9 9"><rect x="0.8" y="3.2" width="7.4" height="3.6" rx="0.5" fill="#555"/><rect x="2.2" y="1" width="4.6" height="2.2" fill="none" stroke="#555" stroke-width="0.7"/><rect x="2.2" y="6" width="4.6" height="2.4" fill="#ddd" stroke="#555" stroke-width="0.6"/></svg>
<div class="b" style="left:928px;top:91px;width:9px;height:1px;background:#c8cbce"></div>
<svg class="b" style="left:928px;top:97px;" width="9" height="9" viewBox="0 0 9 9"><path d="M1 1 H8 V5.5 M1 1 V8 H4.5" fill="none" stroke="#555" stroke-width="0.8"/><path d="M6.5 4.8 V8.4 M5 7 L6.5 8.5 L8 7" stroke="#555" stroke-width="0.8" fill="none"/></svg>
<svg class="b" style="left:928px;top:109px;" width="9" height="9" viewBox="0 0 9 9"><path d="M1 1 H8 V8 H5 M1 1 V5" fill="none" stroke="#555" stroke-width="0.8"/><path d="M2.5 5 V8.4 M1 7 L2.5 5.5 L4 7" stroke="#555" stroke-width="0.8" fill="none"/></svg>
<div class="b" style="left:928px;top:123px;width:9px;height:1px;background:#c8cbce"></div>
<svg class="b" style="left:928px;top:129px;" width="9" height="9" viewBox="0 0 9 9"><path d="M2.5 3.5 H5.8 A2.3 2.3 0 0 1 5.8 8 H3.5" stroke="#555" stroke-width="0.8" fill="none"/><path d="M3.6 1.8 L1.8 3.5 L3.6 5.2" stroke="#555" stroke-width="0.8" fill="none"/></svg>
<svg class="b" style="left:928px;top:142px;" width="9" height="9" viewBox="0 0 9 9"><path d="M6.5 3.5 H3.2 A2.3 2.3 0 0 0 3.2 8 H5.5" stroke="#999" stroke-width="0.8" fill="none"/><path d="M5.4 1.8 L7.2 3.5 L5.4 5.2" stroke="#999" stroke-width="0.8" fill="none"/></svg>
<div class="b" style="left:928px;top:155px;width:9px;height:1px;background:#c8cbce"></div>
<svg class="b" style="left:928px;top:160px;" width="9" height="9" viewBox="0 0 9 9"><rect x="1" y="1" width="5.2" height="6.2" fill="none" stroke="#555" stroke-width="0.8"/><path d="M3 2.8 H8 V8 H5.5 L3 6" fill="#eee" stroke="#555" stroke-width="0.8"/></svg>
<svg class="b" style="left:928px;top:173px;" width="9" height="9" viewBox="0 0 9 9"><path d="M2.2 1 L6.8 6.2 M6.8 1 L2.2 6.2" stroke="#555" stroke-width="0.8"/><circle cx="1.8" cy="7.2" r="1.1" fill="none" stroke="#555" stroke-width="0.7"/><circle cx="7.2" cy="7.2" r="1.1" fill="none" stroke="#555" stroke-width="0.7"/></svg>
<svg class="b" style="left:928px;top:187px;" width="9" height="9" viewBox="0 0 9 9"><rect x="1.2" y="2" width="6.6" height="6.4" fill="none" stroke="#555" stroke-width="0.8"/><rect x="3" y="1" width="3" height="2" fill="#555"/><path d="M3 5 H6 M3 6.5 H5" stroke="#555" stroke-width="0.6"/></svg>
<div class="b" style="left:928px;top:201px;width:9px;height:1px;background:#c8cbce"></div>
<svg class="b" style="left:928px;top:205px;" width="9" height="9" viewBox="0 0 9 9"><rect x="1" y="1" width="7" height="7" fill="none" stroke="#555" stroke-width="0.8" stroke-dasharray="1.2 1"/><rect x="3" y="3" width="3" height="3" fill="#888"/></svg>
<svg class="b" style="left:928px;top:218px;" width="9" height="9" viewBox="0 0 9 9"><rect x="1" y="1" width="7" height="7" fill="none" stroke="#555" stroke-width="0.8" stroke-dasharray="1.2 1"/><rect x="3" y="3" width="3" height="3" fill="#888"/></svg>
<svg class="b" style="left:928px;top:231px;" width="9" height="9" viewBox="0 0 9 9"><rect x="1" y="1" width="7" height="7" fill="none" stroke="#555" stroke-width="0.8" stroke-dasharray="1.2 1"/><rect x="3" y="3" width="3" height="3" fill="#888"/></svg>
<div class="b" style="left:928px;top:246px;width:9px;height:1px;background:#c8cbce"></div>
<svg class="b" style="left:928px;top:250px;" width="9" height="9" viewBox="0 0 9 9"><path d="M1 1 H6 L8 3 V8 H1Z" fill="none" stroke="#555" stroke-width="0.8"/><rect x="2.2" y="2.2" width="2.2" height="5" fill="#888"/></svg>
<svg class="b" style="left:928px;top:264px;" width="9" height="9" viewBox="0 0 9 9"><path d="M1 1 H8 V8 H1Z" fill="none" stroke="#555" stroke-width="0.8"/><path d="M4.5 5 L7 7.5" stroke="#555" stroke-width="1"/><circle cx="4" cy="4.4" r="1.3" fill="none" stroke="#555" stroke-width="0.7"/></svg>
<svg class="b" style="left:928px;top:277px;" width="9" height="9" viewBox="0 0 9 9"><path d="M1 1 H8 V8 H1Z" fill="none" stroke="#555" stroke-width="0.8"/><rect x="2.5" y="2.5" width="2" height="5" fill="#888"/><path d="M5 7 L7.5 5" stroke="#555" stroke-width="0.8"/></svg>
<div class="b" style="left:928px;top:290px;width:9px;height:1px;background:#c8cbce"></div>
<svg class="b" style="left:928px;top:296px;" width="9" height="9" viewBox="0 0 9 9"><rect x="1" y="1" width="7" height="7" fill="none" stroke="#555" stroke-width="0.8"/><rect x="2" y="2" width="2.2" height="2.2" fill="#555"/><rect x="4.8" y="2" width="2.2" height="2.2" fill="#555"/><rect x="2" y="4.8" width="2.2" height="2.2" fill="#555"/><rect x="4.8" y="4.8" width="2.2" height="2.2" fill="#555"/></svg>
<svg class="b" style="left:928px;top:309px;" width="9" height="9" viewBox="0 0 9 9"><path d="M1 1 L3.5 3.5 M8 1 L5.5 3.5 M1 8 L3.5 5.5 M8 8 L5.5 5.5" stroke="#555" stroke-width="1"/></svg>
<div class="b" style="left:928px;top:322px;width:9px;height:1px;background:#c8cbce"></div>
<svg class="b" style="left:928px;top:328px;" width="9" height="9" viewBox="0 0 9 9"><path d="M1.2 5.2 L4.2 2.2 L7.2 5.2 L4.2 8.2Z" fill="#444"/><path d="M2.6 5.2 L4.2 3.6 L5.8 5.2Z" fill="#e0e0e0"/><path d="M4 0.4 V2.8" stroke="#444" stroke-width="0.8"/><path d="M6.9 5.8 Q8.3 7 7.9 8.4" stroke="#444" stroke-width="0.9" fill="none"/></svg>
<svg class="b" style="left:928px;top:341px;" width="9" height="9" viewBox="0 0 9 9"><path d="M1 8.5 L3.8 1 H4.6 L7.2 8.5 M2.2 6 H6" stroke="#555" stroke-width="0.8" fill="none"/><rect x="7.6" y="0.5" width="0.8" height="4" fill="#e55"/></svg>
<svg class="b" style="left:928px;top:354px;" width="9" height="9" viewBox="0 0 9 9"><path d="M1.2 2.2 H7.8 M1.2 4.5 H7.8 M1.2 6.8 H7.8" stroke="#333" stroke-width="1.2"/></svg>
<svg class="b" style="left:928px;top:367px;" width="9" height="9" viewBox="0 0 9 9"><path d="M3 2 L1 4.5 L3 7 M6 2 L8 4.5 L6 7 M5.2 1.5 L3.8 7.5" stroke="#888" stroke-width="0.7" fill="none"/></svg>
<svg class="b" style="left:928px;top:379px;" width="9" height="9" viewBox="0 0 9 9"><path d="M1 1 H7.5 V4 H4 V8 H1Z" fill="none" stroke="#555" stroke-width="0.8"/><rect x="2" y="5" width="1.5" height="2.5" fill="#888"/></svg>
<div class="b" style="left:928px;top:393px;width:9px;height:1px;background:#c8cbce"></div>
<svg class="b" style="left:928px;top:398px;" width="9" height="9" viewBox="0 0 9 9"><rect x="1" y="1" width="7" height="7" fill="#eee" stroke="#555" stroke-width="0.8"/><rect x="1" y="1" width="7" height="1.8" fill="#555"/><rect x="2" y="4" width="2.2" height="3" fill="#555"/></svg>
<svg class="b" style="left:928px;top:412px;" width="9" height="9" viewBox="0 0 9 9"><rect x="0.5" y="0.5" width="8" height="8" fill="#2a2e32"/><rect x="1.8" y="3" width="5.4" height="3" rx="1.5" fill="#3daee9"/><circle cx="5.8" cy="4.5" r="1.1" fill="#fff"/></svg>
<div class="b" style="left:945px;top:36px;width:12px;height:12px;background:#c4c9cd;border-radius:2px"></div>
<svg class="b" style="left:947px;top:38px;" width="9" height="9" viewBox="0 0 9 9"><path d="M1.6 7.2 V4.6 A2.9 2.9 0 0 1 7.4 4.6 V7.2" stroke="#333" stroke-width="1.4" fill="none"/><circle cx="7.4" cy="7.4" r="1.3" fill="#3daee9"/></svg>
<div class="b" style="left:947px;top:52px;width:8px;height:1px;background:#c8cbce"></div>
<svg class="b" style="left:947px;top:56px;" width="9" height="9" viewBox="0 0 9 9"><path d="M1.6 7.2 V4.6 A2.9 2.9 0 0 1 7.4 4.6 V7.2" stroke="#333" stroke-width="1.4" fill="none"/><circle cx="7.4" cy="7.4" r="1.3" fill="#3daee9"/></svg>
<svg class="b" style="left:947px;top:68px;" width="9" height="9" viewBox="0 0 9 9"><path d="M1.5 1.5 H7.5 V7.5 H1.5Z" fill="none" stroke="#666" stroke-width="0.7" stroke-dasharray="1 1.2"/><circle cx="1.5" cy="1.5" r="0.8" fill="#444"/><circle cx="7.5" cy="1.5" r="0.8" fill="#444"/><circle cx="1.5" cy="7.5" r="0.8" fill="#444"/><circle cx="7.5" cy="7.5" r="0.8" fill="#444"/><circle cx="5" cy="5" r="1" fill="#3daee9"/></svg>
<svg class="b" style="left:947px;top:80px;" width="9" height="9" viewBox="0 0 9 9"><path d="M1.5 1.5 H7.5 V7.5 H1.5Z" fill="none" stroke="#666" stroke-width="0.7" stroke-dasharray="1 1.2"/><circle cx="1.5" cy="1.5" r="0.8" fill="#444"/><circle cx="7.5" cy="1.5" r="0.8" fill="#444"/><circle cx="1.5" cy="7.5" r="0.8" fill="#444"/><circle cx="7.5" cy="7.5" r="0.8" fill="#444"/><circle cx="5" cy="5" r="1" fill="#3daee9"/></svg>
<svg class="b" style="left:947px;top:92px;" width="9" height="9" viewBox="0 0 9 9"><path d="M1.5 1.5 H7.5 V7.5 H1.5Z" fill="none" stroke="#666" stroke-width="0.7" stroke-dasharray="1 1.2"/><circle cx="1.5" cy="1.5" r="0.8" fill="#444"/><circle cx="7.5" cy="1.5" r="0.8" fill="#444"/><circle cx="1.5" cy="7.5" r="0.8" fill="#444"/><circle cx="7.5" cy="7.5" r="0.8" fill="#444"/><circle cx="5" cy="5" r="1" fill="#3daee9"/></svg>
<svg class="b" style="left:947px;top:104px;" width="9" height="9" viewBox="0 0 9 9"><path d="M1.5 1.5 H7.5 V7.5 H1.5Z" fill="none" stroke="#666" stroke-width="0.7" stroke-dasharray="1 1.2"/><circle cx="1.5" cy="1.5" r="0.8" fill="#444"/><circle cx="7.5" cy="1.5" r="0.8" fill="#444"/><circle cx="1.5" cy="7.5" r="0.8" fill="#444"/><circle cx="7.5" cy="7.5" r="0.8" fill="#444"/><circle cx="5" cy="5" r="1" fill="#3daee9"/></svg>
<div class="b" style="left:947px;top:117px;width:8px;height:1px;background:#c8cbce"></div>
<div class="b" style="left:945px;top:120px;width:12px;height:12px;background:#c4c9cd;border-radius:2px"></div>
<svg class="b" style="left:947px;top:122px;" width="9" height="9" viewBox="0 0 9 9"><path d="M1.6 7.2 V4.6 A2.9 2.9 0 0 1 7.4 4.6 V7.2" stroke="#333" stroke-width="1.4" fill="none"/><circle cx="7.4" cy="7.4" r="1.3" fill="#3daee9"/></svg>
<svg class="b" style="left:947px;top:134px;" width="9" height="9" viewBox="0 0 9 9"><path d="M1.5 7.5 L7.5 1.5" stroke="#3daee9" stroke-width="0.8"/><circle cx="4.5" cy="4.5" r="1.1" fill="#2080c0"/></svg>
<svg class="b" style="left:947px;top:146px;" width="9" height="9" viewBox="0 0 9 9"><path d="M1.5 1.5 L7.5 7.5 M7.5 1.5 L1.5 7.5" stroke="#3daee9" stroke-width="0.9"/></svg>
<svg class="b" style="left:947px;top:158px;" width="9" height="9" viewBox="0 0 9 9"><rect x="1.5" y="1.5" width="6" height="6" fill="none" stroke="#3daee9" stroke-width="0.9"/><circle cx="1.5" cy="1.5" r="0.9" fill="#3daee9"/><circle cx="7.5" cy="1.5" r="0.9" fill="#3daee9"/><circle cx="1.5" cy="7.5" r="0.9" fill="#3daee9"/><circle cx="7.5" cy="7.5" r="0.9" fill="#3daee9"/></svg>
<svg class="b" style="left:947px;top:170px;" width="9" height="9" viewBox="0 0 9 9"><path d="M4.5 1 L8 4.5 L4.5 8 L1 4.5Z" fill="none" stroke="#3daee9" stroke-width="0.9"/></svg>
<svg class="b" style="left:947px;top:182px;" width="9" height="9" viewBox="0 0 9 9"><path d="M1 4.5 H8" stroke="#3daee9" stroke-width="0.8"/><circle cx="4.5" cy="4.5" r="1" fill="#3daee9"/></svg>
<div class="b" style="left:945px;top:198px;width:12px;height:11.5px;background:#c4c9cd;border-radius:2px"></div>
<svg class="b" style="left:947px;top:200px;" width="9" height="9" viewBox="0 0 9 9"><path d="M1.6 7.2 V4.6 A2.9 2.9 0 0 1 7.4 4.6 V7.2" stroke="#333" stroke-width="1.4" fill="none"/><circle cx="7.4" cy="7.4" r="1.3" fill="#3daee9"/></svg>
<svg class="b" style="left:947px;top:212px;" width="9" height="9" viewBox="0 0 9 9"><circle cx="4.5" cy="4.5" r="3.3" fill="none" stroke="#666" stroke-width="0.7"/><circle cx="4.5" cy="4.5" r="1.2" fill="#3daee9"/></svg>
<svg class="b" style="left:947px;top:224px;" width="9" height="9" viewBox="0 0 9 9"><path d="M2 3 A3 3 0 0 1 6.5 2.2" stroke="#888" stroke-width="0.7" fill="none"/><circle cx="5.5" cy="5.5" r="2" fill="none" stroke="#3daee9" stroke-width="0.9"/></svg>
<svg class="b" style="left:947px;top:236px;" width="9" height="9" viewBox="0 0 9 9"><path d="M2 8.3 L4.2 1 H5 L7.2 8.3 M3 5.5 H6.2" stroke="#444" stroke-width="0.8" fill="none"/><circle cx="1.6" cy="7.8" r="0.9" fill="#3daee9"/></svg>
<div class="b" style="left:947px;top:249px;width:8px;height:1px;background:#c8cbce"></div>
<svg class="b" style="left:947px;top:253px;" width="9" height="9" viewBox="0 0 9 9"><path d="M1.5 1 H7.5 V6 L5.5 8 H1.5Z" fill="none" stroke="#555" stroke-width="0.8"/></svg>
<div class="b" style="left:945px;top:264px;width:12px;height:24px;background:#c4c9cd;border-radius:2px"></div>
<div class="b" style="left:945px;top:276px;width:12px;height:0.6px;background:#d6d9dc"></div>
<svg class="b" style="left:947px;top:267px;" width="9" height="9" viewBox="0 0 9 9"><rect x="1" y="1" width="6.5" height="6.5" fill="#8a8a8a"/><path d="M1 3 H7.5 M1 5.5 H7.5 M3 1 V7.5 M5.5 1 V7.5" stroke="#9a9a9a" stroke-width="0.5"/></svg>
<svg class="b" style="left:947px;top:278px;" width="9" height="9" viewBox="0 0 9 9"><path d="M2.5 3 V8.5 M6.5 3 V8.5" stroke="#444" stroke-width="0.8"/><path d="M1.5 4.2 L2.5 3 L3.5 4.2 M5.5 4.2 L6.5 3 L7.5 4.2" stroke="#444" stroke-width="0.7" fill="none"/><path d="M1 1 H4" stroke="#888" stroke-width="0.6"/></svg>
<div class="b" style="left:686px;top:33px;width:1px;height:442px;background:#c2c5c8"></div>
<div class="b" style="left:686px;top:33px;width:237px;height:1px;background:#c5c8cb"></div>
<div class="b" style="left:922px;top:33px;width:1px;height:442px;background:#f7f8f9"></div>
<svg class="b" style="left:688px;top:36px;" width="8" height="7" viewBox="0 0 8 7"><path d="M1.2 3.8 L3.8 1.2 L6.4 3.8 L3.8 6.4Z" fill="#333"/><path d="M2.3 3.8 L3.8 2.3 L5.3 3.8Z" fill="#ddd"/><path d="M3.6 0 V2" stroke="#333" stroke-width="0.7"/><path d="M6.2 4.3 Q7.4 5.4 7 6.5" stroke="#333" stroke-width="0.8" fill="none"/></svg>
<div class="t" style="left:695.60px;top:36.80px;font-size:6.5px;line-height:6.5px;color:#41464b;font-weight:normal;">Fill and Stroke (Shift+Ctrl+F)</div>
<svg class="b" style="left:905px;top:36.5px;" width="6" height="6" viewBox="0 0 6 6"><rect x="0.5" y="0.5" width="5" height="5" fill="none" stroke="#777" stroke-width="0.7"/><path d="M3.8 1.8 L2 3 L3.8 4.2Z" fill="#555"/></svg>
<svg class="b" style="left:914px;top:36.5px;" width="6" height="6" viewBox="0 0 6 6"><rect x="0.5" y="0.5" width="5" height="5" fill="none" stroke="#777" stroke-width="0.7"/><path d="M1.8 1.8 L4.2 4.2 M4.2 1.8 L1.8 4.2" stroke="#555" stroke-width="0.8"/></svg>
<div class="b" style="left:687px;top:43px;width:234px;height:1px;background:#c5c8cb"></div>
<div class="b" style="left:920px;top:43px;width:1px;height:196px;background:#c5c8cb"></div>
<div class="b" style="left:714px;top:46px;width:102px;height:11px;background:#c3c8cc;border-radius:1.5px 1.5px 0 0"></div>
<div class="b" style="left:689px;top:57px;width:230px;height:146px;border:1px solid #c5c8cb;border-radius:1px;box-sizing:border-box"></div>
<div class="b" style="left:689px;top:45.5px;width:26px;height:12px;background:#f3f4f5;border:1px solid #c5c8cb;border-bottom:none;border-radius:2px 2px 0 0;box-sizing:border-box"></div>
<div class="b" style="left:693px;top:49.5px;width:5px;height:5px;background:linear-gradient(135deg,#333,#888)"></div>
<div class="t" style="left:703.30px;top:47.97px;font-size:7px;line-height:7px;color:#41464b;font-weight:normal;">Fill</div>
<div class="b" style="left:715.5px;top:49.5px;width:5px;height:5px;border:0.8px solid #555;box-sizing:border-box"></div>
<div class="t" style="left:725.50px;top:47.97px;font-size:7px;line-height:7px;color:#41464b;font-weight:normal;">Stroke paint</div>
<svg class="b" style="left:765.5px;top:49.5px;" width="6" height="4" viewBox="0 0 6 4"><rect x="0.4" y="0.4" width="5.2" height="3.2" fill="none" stroke="#555" stroke-width="0.7"/><path d="M2 0.5 V3.5 M4 0.5 V3.5" stroke="#555" stroke-width="0.6"/></svg>
<div class="t" style="left:776.80px;top:47.97px;font-size:7px;line-height:7px;color:#41464b;font-weight:normal;">Stroke style</div>
<svg class="b" style="left:695.5px;top:63.5px;" width="8" height="8" viewBox="0 0 8 8"><path d="M0.8 0.8 L7.2 7.2 M7.2 0.8 L0.8 7.2" stroke="#e04050" stroke-width="0.9"/></svg>
<div class="b" style="left:706px;top:61px;width:12.5px;height:12.5px;background:linear-gradient(#8cc6ea,#74b5e2);border-radius:2px"></div>
<div class="b" style="left:709px;top:64px;width:7px;height:7px;background:#4a4a4a;border:0.5px solid #222;box-sizing:border-box"></div>
<div class="b" style="left:722px;top:64px;width:7px;height:7px;background:linear-gradient(to right,#b8b8b8,#505050)"></div>
<div class="b" style="left:735px;top:64px;width:7px;height:7px;background:radial-gradient(circle,#a8a8a8 0,#404040 85%)"></div>
<svg class="b" style="left:747.5px;top:63.5px;" width="8" height="8" viewBox="0 0 8 8"><rect x="0.5" y="0.5" width="7" height="7" rx="1" fill="#ddd"/><path d="M2.6 0.5 V7.5 M5.4 0.5 V7.5 M0.5 2.6 H7.5 M0.5 5.4 H7.5" stroke="#333" stroke-width="0.8"/></svg>
<svg class="b" style="left:760.5px;top:63.5px;" width="8" height="8" viewBox="0 0 8 8"><path d="M0.5 1 H5 L7.5 3 V7.5 H0.5Z" fill="#ffb020"/><path d="M4 1 H5 L7.5 3 V7.5 H4Z" fill="#ff2020"/><path d="M0.5 1 H2.5 V7.5 H0.5Z" fill="#ffd040"/></svg>
<div class="t" style="left:774.30px;top:64.10px;font-size:8.5px;line-height:8.5px;color:#555;font-weight:normal;">?</div>
<svg class="b" style="left:899px;top:64px;" width="6" height="7" viewBox="0 0 6 7"><path d="M0.8 1 L1.8 2 H4.2 L5.2 1 V4 A2.2 2.2 0 0 1 0.8 4Z" fill="none" stroke="#333" stroke-width="0.9"/></svg>
<div class="b" style="left:906.5px;top:61px;width:9px;height:12.5px;background:linear-gradient(#8cc6ea,#74b5e2);border-radius:2px"></div>
<svg class="b" style="left:908px;top:64px;" width="6" height="7" viewBox="0 0 6 7"><path d="M0.8 1 L1.8 2 H4.2 L5.2 1 V4 A2.2 2.2 0 0 1 0.8 4Z" fill="#333"/></svg>
<div class="t" style="left:692.60px;top:79.07px;font-size:7px;line-height:7px;color:#41464b;font-weight:bold;">Flat colour</div>
<div class="b" style="left:693px;top:89.5px;width:43px;height:10px;background:linear-gradient(#90c8ea,#72b3df);border:1px solid #7ab4dc;border-radius:2px;box-sizing:border-box"></div>
<div class="t" style="left:708.80px;top:93.29px;font-size:5.8px;line-height:5.8px;color:#3a4a58;font-weight:normal;">RGB</div>
<div class="b" style="left:737.5px;top:89.5px;width:43px;height:10px;background:#f0f1f2;border:1px solid #b9bcbf;border-radius:2px;box-sizing:border-box"></div>
<div class="t" style="left:754.00px;top:93.29px;font-size:5.8px;line-height:5.8px;color:#41464b;font-weight:normal;">HSL</div>
<div class="b" style="left:782.5px;top:89.5px;width:42px;height:10px;background:#f0f1f2;border:1px solid #b9bcbf;border-radius:2px;box-sizing:border-box"></div>
<div class="t" style="left:795.50px;top:93.29px;font-size:5.8px;line-height:5.8px;color:#41464b;font-weight:normal;">CMYK</div>
<div class="b" style="left:826.5px;top:89.5px;width:43px;height:10px;background:#f0f1f2;border:1px solid #b9bcbf;border-radius:2px;box-sizing:border-box"></div>
<div class="t" style="left:841.00px;top:93.29px;font-size:5.8px;line-height:5.8px;color:#41464b;font-weight:normal;">Wheel</div>
<div class="b" style="left:871.5px;top:89.5px;width:43.5px;height:10px;background:#f0f1f2;border:1px solid #b9bcbf;border-radius:2px;box-sizing:border-box"></div>
<div class="t" style="left:887.00px;top:93.29px;font-size:5.8px;line-height:5.8px;color:#41464b;font-weight:normal;">CMS</div>
<div class="t" style="left:697.00px;top:106.95px;font-size:6.2px;line-height:6.2px;color:#60656a;font-weight:normal;">R:</div>
<div class="b" style="left:708px;top:104px;width:175px;height:11px;background:linear-gradient(to right,#000005,#ff0005)"></div>
<svg class="b" style="left:799.275px;top:103px;" width="4" height="3" viewBox="0 0 4 3"><path d="M0.3 0 H3.7 L2 2.2Z" fill="#444"/></svg>
<svg class="b" style="left:799.275px;top:113px;" width="4" height="3" viewBox="0 0 4 3"><path d="M0.3 3 H3.7 L2 0.8Z" fill="#444"/></svg>
<div class="b" style="left:888px;top:104px;width:17px;height:11px;background:#fcfcfc"></div>
<div class="t" style="left:889.30px;top:106.80px;font-size:6.5px;line-height:6.5px;color:#41464b;font-weight:normal;">136</div>
<div class="b" style="left:905.5px;top:104px;width:6px;height:11px;background:#eceded;border:1px solid #d0d3d6;border-radius:1px;box-sizing:border-box"></div>
<svg class="b" style="left:905.5px;top:104px;" width="6" height="11" viewBox="0 0 6 11"><path d="M1 3.6 L3 1.7 L5 3.6 M1 7.4 L3 9.3 L5 7.4" stroke="#444" stroke-width="0.7" fill="none"/></svg>
<div class="t" style="left:697.00px;top:119.95px;font-size:6.2px;line-height:6.2px;color:#60656a;font-weight:normal;">G:</div>
<div class="b" style="left:708px;top:117px;width:175px;height:11px;background:linear-gradient(to right,#880005,#88ff05)"></div>
<svg class="b" style="left:706.0px;top:116px;" width="4" height="3" viewBox="0 0 4 3"><path d="M0.3 0 H3.7 L2 2.2Z" fill="#444"/></svg>
<svg class="b" style="left:706.0px;top:126px;" width="4" height="3" viewBox="0 0 4 3"><path d="M0.3 3 H3.7 L2 0.8Z" fill="#444"/></svg>
<div class="b" style="left:888px;top:117px;width:17px;height:11px;background:#fcfcfc"></div>
<div class="t" style="left:889.30px;top:119.80px;font-size:6.5px;line-height:6.5px;color:#41464b;font-weight:normal;">0</div>
<div class="b" style="left:905.5px;top:117px;width:6px;height:11px;background:#eceded;border:1px solid #d0d3d6;border-radius:1px;box-sizing:border-box"></div>
<svg class="b" style="left:905.5px;top:117px;" width="6" height="11" viewBox="0 0 6 11"><path d="M1 3.6 L3 1.7 L5 3.6 M1 7.4 L3 9.3 L5 7.4" stroke="#444" stroke-width="0.7" fill="none"/></svg>
<div class="t" style="left:697.00px;top:132.95px;font-size:6.2px;line-height:6.2px;color:#60656a;font-weight:normal;">B:</div>
<div class="b" style="left:708px;top:130px;width:175px;height:11px;background:linear-gradient(to right,#880000,#8800ff)"></div>
<svg class="b" style="left:709.5px;top:129px;" width="4" height="3" viewBox="0 0 4 3"><path d="M0.3 0 H3.7 L2 2.2Z" fill="#444"/></svg>
<svg class="b" style="left:709.5px;top:139px;" width="4" height="3" viewBox="0 0 4 3"><path d="M0.3 3 H3.7 L2 0.8Z" fill="#444"/></svg>
<div class="b" style="left:888px;top:130px;width:17px;height:11px;background:#fcfcfc"></div>
<div class="t" style="left:889.30px;top:132.80px;font-size:6.5px;line-height:6.5px;color:#41464b;font-weight:normal;">5</div>
<div class="b" style="left:905.5px;top:130px;width:6px;height:11px;background:#eceded;border:1px solid #d0d3d6;border-radius:1px;box-sizing:border-box"></div>
<svg class="b" style="left:905.5px;top:130px;" width="6" height="11" viewBox="0 0 6 11"><path d="M1 3.6 L3 1.7 L5 3.6 M1 7.4 L3 9.3 L5 7.4" stroke="#444" stroke-width="0.7" fill="none"/></svg>
<div class="t" style="left:697.00px;top:145.95px;font-size:6.2px;line-height:6.2px;color:#60656a;font-weight:normal;">A:</div>
<div class="b" style="left:708px;top:143px;width:175px;height:11px;background:linear-gradient(to right,rgba(136,0,5,0),rgba(136,0,5,1)),repeating-conic-gradient(#6a6a6a 0 25%,#a8a8a8 0 50%) 0 0/8px 8px"></div>
<svg class="b" style="left:881.0px;top:142px;" width="4" height="3" viewBox="0 0 4 3"><path d="M0.3 0 H3.7 L2 2.2Z" fill="#444"/></svg>
<svg class="b" style="left:881.0px;top:152px;" width="4" height="3" viewBox="0 0 4 3"><path d="M0.3 3 H3.7 L2 0.8Z" fill="#444"/></svg>
<div class="b" style="left:888px;top:143px;width:17px;height:11px;background:#fcfcfc"></div>
<div class="t" style="left:889.30px;top:145.80px;font-size:6.5px;line-height:6.5px;color:#41464b;font-weight:normal;">255</div>
<div class="b" style="left:905.5px;top:143px;width:6px;height:11px;background:#eceded;border:1px solid #d0d3d6;border-radius:1px;box-sizing:border-box"></div>
<svg class="b" style="left:905.5px;top:143px;" width="6" height="11" viewBox="0 0 6 11"><path d="M1 3.6 L3 1.7 L5 3.6 M1 7.4 L3 9.3 L5 7.4" stroke="#444" stroke-width="0.7" fill="none"/></svg>
<div class="b" style="left:694px;top:190px;width:9px;height:9px;background:#d5d7d9"></div>
<svg class="b" style="left:694px;top:190px;" width="9" height="9" viewBox="0 0 9 9"><defs><linearGradient id="tri" x1="0" y1="0" x2="0.3" y2="1"><stop offset="0" stop-color="#3c3"/><stop offset="0.5" stop-color="#c8c040"/><stop offset="0.75" stop-color="#c4c"/><stop offset="1" stop-color="#44d"/></linearGradient></defs><path d="M1.2 0.6 L2.4 9 L8 6Z" fill="url(#tri)"/></svg>
<svg class="b" style="left:705px;top:190px;" width="9" height="9" viewBox="0 0 9 9"><circle cx="4.5" cy="4.5" r="3.2" fill="#fff" stroke="#a84444" stroke-width="2.4"/></svg>
<svg class="b" style="left:719.5px;top:192px;" width="5" height="7" viewBox="0 0 5 7"><path d="M2.5 0.5 Q4.4 3.4 4.4 4.6 A1.9 1.9 0 0 1 0.6 4.6 Q0.6 3.4 2.5 0.5Z" fill="#333"/></svg>
<div class="t" style="left:866.50px;top:192.12px;font-size:6px;line-height:6px;color:#555;font-weight:normal;">RGBA:</div>
<div class="b" style="left:885px;top:190px;width:30px;height:9px;background:#fcfcfc"></div>
<div class="t" style="left:886.00px;top:192.12px;font-size:6px;line-height:6px;color:#555;font-weight:normal;letter-spacing:0.3px">880005ff</div>
<div class="b" style="left:690px;top:204.5px;width:223px;height:12px;background:#fcfcfc"></div>
<div class="t" style="left:691.00px;top:207.50px;font-size:6.5px;line-height:6.5px;color:#41464b;font-weight:normal;">Blur (%)</div>
<div class="t" style="left:901.00px;top:207.50px;font-size:6.5px;line-height:6.5px;color:#41464b;font-weight:normal;">0.0</div>
<div class="b" style="left:913px;top:204.5px;width:5.5px;height:12px;background:#eceded;border:1px solid #d0d3d6;border-radius:1px;box-sizing:border-box"></div>
<svg class="b" style="left:913px;top:204.5px;" width="6" height="12" viewBox="0 0 6 12"><path d="M1.2 4.5 L2.8 2.7 L4.4 4.5 M1.2 7.5 L2.8 9.3 L4.4 7.5" stroke="#777" stroke-width="0.6" fill="none"/></svg>
<div class="b" style="left:690px;top:220px;width:223px;height:11px;background:#3daee9"></div>
<div class="t" style="left:691.00px;top:222.70px;font-size:6.5px;line-height:6.5px;color:#fcfcfc;font-weight:normal;">Opacity (%)</div>
<div class="t" style="left:894.50px;top:222.70px;font-size:6.5px;line-height:6.5px;color:#fcfcfc;font-weight:normal;">100.0</div>
<div class="b" style="left:913px;top:219.5px;width:5.5px;height:12px;background:#eceded;border:1px solid #d0d3d6;border-radius:1px;box-sizing:border-box"></div>
<svg class="b" style="left:913px;top:219.5px;" width="6" height="12" viewBox="0 0 6 12"><path d="M1.2 4.5 L2.8 2.7 L4.4 4.5 M1.2 7.5 L2.8 9.3 L4.4 7.5" stroke="#777" stroke-width="0.6" fill="none"/></svg>
<div class="b" style="left:687px;top:238px;width:234px;height:1px;background:#c5c8cb"></div>
<div class="b" style="left:688px;top:240px;width:233px;height:11.5px;background:#eff0f1;border:1px solid #c5c8cb;border-radius:2px;box-sizing:border-box"></div>
<svg class="b" style="left:913px;top:243px;" width="6" height="5" viewBox="0 0 6 5"><path d="M1 3.8 L3 1.6 L5 3.8" stroke="#bbb" stroke-width="0.7" fill="none"/></svg>
<div class="t" style="left:698.30px;top:243.50px;font-size:6.5px;line-height:6.5px;color:#41464b;font-weight:normal;">Export PNG Image (Shift+Ctrl+E)</div>
<svg class="b" style="left:690px;top:242.5px;" width="7" height="7" viewBox="0 0 7 7"><path d="M1.2 0.8 H5.8 V6.2 H3.6 M1.2 0.8 V6.2 H2" stroke="#555" stroke-width="0.8" fill="none"/><path d="M3 3.5 V6.8" stroke="#555" stroke-width="0.8"/></svg>
<div class="b" style="left:688px;top:253px;width:233px;height:11.5px;background:#eff0f1;border:1px solid #c5c8cb;border-radius:2px;box-sizing:border-box"></div>
<svg class="b" style="left:913px;top:256px;" width="6" height="5" viewBox="0 0 6 5"><path d="M1 3.8 L3 1.6 L5 3.8" stroke="#bbb" stroke-width="0.7" fill="none"/></svg>
<div class="t" style="left:698.30px;top:256.50px;font-size:6.5px;line-height:6.5px;color:#41464b;font-weight:normal;">Align and Distribute (Shift+Ctrl+A)</div>
<svg class="b" style="left:690px;top:255.5px;" width="7" height="7" viewBox="0 0 7 7"><path d="M0.8 0.5 V6.5" stroke="#555" stroke-width="0.7"/><rect x="1.5" y="1" width="4.8" height="2" fill="none" stroke="#555" stroke-width="0.7"/><rect x="1.5" y="4" width="2.5" height="2.4" fill="none" stroke="#555" stroke-width="0.7"/></svg>
<div class="b" style="left:688px;top:266px;width:233px;height:11.5px;background:#eff0f1;border:1px solid #c5c8cb;border-radius:2px;box-sizing:border-box"></div>
<svg class="b" style="left:913px;top:269px;" width="6" height="5" viewBox="0 0 6 5"><path d="M1 3.8 L3 1.6 L5 3.8" stroke="#bbb" stroke-width="0.7" fill="none"/></svg>
<div class="t" style="left:698.30px;top:269.50px;font-size:6.5px;line-height:6.5px;color:#41464b;font-weight:normal;">Text and Font (Shift+Ctrl+T)</div>
<svg class="b" style="left:690px;top:268.5px;" width="7" height="7" viewBox="0 0 7 7"><path d="M0.6 6.6 L2.8 0.8 H3.4 L5.6 6.6 M1.5 4.6 H4.8" stroke="#555" stroke-width="0.7" fill="none"/><rect x="5.6" y="0.5" width="0.9" height="3.5" fill="#f07060"/></svg>
<div class="b" style="left:688px;top:279px;width:233px;height:11.5px;background:#eff0f1;border:1px solid #c5c8cb;border-radius:2px;box-sizing:border-box"></div>
<svg class="b" style="left:913px;top:282px;" width="6" height="5" viewBox="0 0 6 5"><path d="M1 3.8 L3 1.6 L5 3.8" stroke="#bbb" stroke-width="0.7" fill="none"/></svg>
<div class="t" style="left:698.30px;top:282.50px;font-size:6.5px;line-height:6.5px;color:#41464b;font-weight:normal;">Transform (Shift+Ctrl+M)</div>
<svg class="b" style="left:690px;top:281.5px;" width="7" height="7" viewBox="0 0 7 7"><path d="M1 0.6 V2.4 M0.4 1.2 L1 0.5 L1.6 1.2 M5.5 0.6 V2.4 M1 4.6 V6.4 M5.5 4.6 V6.4 M0.4 5.8 L1 6.5 L1.6 5.8" stroke="#555" stroke-width="0.6" fill="none"/><circle cx="5.4" cy="5.4" r="1.1" fill="none" stroke="#555" stroke-width="0.6"/></svg>
<div class="b" style="left:688px;top:292px;width:233px;height:11.5px;background:linear-gradient(#90c8ea,#72b3df);border-radius:2px"></div>
<svg class="b" style="left:913px;top:295px;" width="6" height="5" viewBox="0 0 6 5"><path d="M1 3.8 L3 1.6 L5 3.8" stroke="#333" stroke-width="0.8" fill="none"/></svg>
<div class="t" style="left:698.30px;top:295.50px;font-size:6.5px;line-height:6.5px;color:#31363b;font-weight:normal;">Fill and Stroke (Shift+Ctrl+F)</div>
<svg class="b" style="left:690px;top:294.5px;" width="7" height="7" viewBox="0 0 7 7"><path d="M0.8 4 L3.3 1.5 L5.8 4 L3.3 6.5Z" fill="#333"/><path d="M1.9 4 L3.3 2.6 L4.7 4Z" fill="#ddd"/><path d="M3.1 0 V2" stroke="#333" stroke-width="0.6"/><path d="M5.6 4.4 Q6.6 5.4 6.3 6.5" stroke="#333" stroke-width="0.7" fill="none"/></svg>
</div></body></html>
